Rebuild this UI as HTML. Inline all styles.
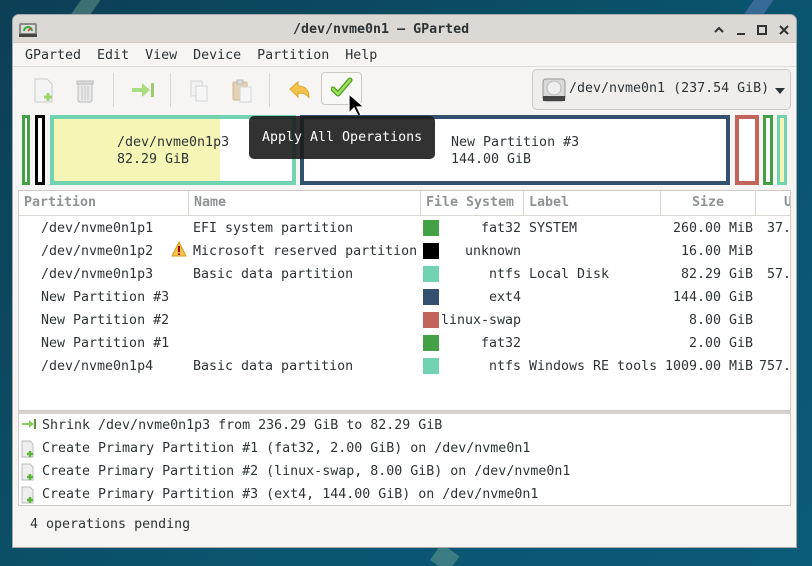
<!DOCTYPE html>
<html><head><meta charset="utf-8"><style>
*{box-sizing:border-box;margin:0;padding:0}
html{width:812px;height:566px;overflow:hidden}
body{width:812px;height:566px;overflow:hidden;position:relative;background:#0b4f66;font-family:"DejaVu Sans Mono","Liberation Mono",monospace;font-size:13.3px;color:#2e3436}
.bg{position:absolute;inset:0;background:linear-gradient(135deg,#0d3f55 0%,#0a5570 60%,#0b5a78 100%)}
.stripe{position:absolute;background:rgba(120,170,150,.45);transform:rotate(-55deg);transform-origin:0 0}
.win{position:absolute;left:13px;top:15px;width:783px;height:532px;background:#f6f5f4;border-radius:6px 6px 0 0;overflow:hidden;box-shadow:0 0 0 1px #aaa}
.title{position:absolute;left:0;top:0;width:100%;height:28px;background:#dcd9d5;border-bottom:1px solid #cfcac5}
.abs{position:absolute;white-space:pre}
.menu{position:absolute;top:28px;left:0;width:100%;height:24px;background:#f6f5f4;border-bottom:1px solid #dedbd8}
.sep{position:absolute;top:58px;width:1px;height:34px;background:#d8d5d2}
.tbl{position:absolute;left:5px;top:175px;width:773px;height:221px;background:#fff;border:1px solid #cfcac5;overflow:hidden}
.hdr{position:absolute;top:0;height:25px;border-right:1px solid #dcd8d4;border-bottom:1px solid #dcd8d4;color:#8f9394;font-weight:bold;padding:4px 5px}
.sw{position:absolute;width:16px;height:16px}
</style></head><body>
<div class="bg"></div>
<div class="stripe" style="left:60px;top:30px;width:90px;height:16px"></div>
<div class="stripe" style="left:430px;top:560px;width:20px;height:22px"></div>
<div class="stripe" style="left:740px;top:20px;width:40px;height:16px;background:rgba(100,130,190,.5)"></div>
<div class="win">
 <div class="title">
  <svg class="abs" style="left:5px;top:6px" width="20" height="18" viewBox="0 0 20 18"><rect x="1" y="2" width="18" height="13" rx="2" fill="#8b8b8b"/><rect x="3" y="4" width="14" height="8" rx="1" fill="#ddd"/><path d="M6 10a4 4 0 0 1 8 0" stroke="#3a3" stroke-width="2" fill="none"/><path d="M10 10l3-3" stroke="#c33" stroke-width="1.5"/><rect x="1" y="13" width="18" height="3" fill="#444"/></svg>
  <div class="abs" style="left:280px;top:7px;font-weight:bold;color:#2e3436">/dev/nvme0n1 – GParted</div>
  <svg class="abs" style="left:700px;top:9px" width="80" height="12" viewBox="0 0 80 12"><path d="M2 8l4-4 4 4" stroke="#2e3436" stroke-width="2" fill="none"/><path d="M24 10h8" stroke="#2e3436" stroke-width="2"/><rect x="45" y="2" width="8" height="8" stroke="#2e3436" stroke-width="2" fill="none"/><path d="M67 2l8 8M75 2l-8 8" stroke="#2e3436" stroke-width="2"/></svg>
 </div>
 <div class="menu">
  <div class="abs" style="left:12px;top:5px">GParted  Edit  View  Device  Partition  Help</div>
 </div>
 <svg class="abs" style="left:20px;top:63px" width="22" height="26" viewBox="0 0 22 26"><path d="M2 1h12l5 5v18H2z" fill="#f4f4f4" stroke="#ccc"/><path d="M15 15v8M11 19h8" stroke="#9fd36f" stroke-width="3"/></svg>
 <svg class="abs" style="left:62px;top:63px" width="20" height="26" viewBox="0 0 20 26"><rect x="3" y="5" width="14" height="19" rx="2" fill="#e8e8e8" stroke="#bbb"/><rect x="2" y="3" width="16" height="3" fill="#ddd" stroke="#bbb"/><path d="M7 8v14M10 8v14M13 8v14" stroke="#c8c8c8"/></svg>
 <div class="sep" style="left:100px"></div>
 <svg class="abs" style="left:118px;top:66px" width="24" height="18" viewBox="0 0 24 18"><path d="M1 7h10V2l8 7-8 7v-5H1z" fill="#a8dd7e"/><rect x="20" y="2" width="3" height="14" fill="#9ccc6c"/></svg>
 <div class="sep" style="left:157px"></div>
 <svg class="abs" style="left:176px;top:63px" width="20" height="26" viewBox="0 0 20 26"><rect x="2" y="3" width="11" height="15" fill="#f2f2f2" stroke="#d4d4d4"/><rect x="7" y="8" width="11" height="15" fill="#f6f6f6" stroke="#d4d4d4"/></svg>
 <svg class="abs" style="left:218px;top:63px" width="22" height="26" viewBox="0 0 22 26"><rect x="2" y="4" width="14" height="18" rx="1" fill="#e4d2b4" stroke="#cfb994"/><rect x="6" y="2" width="6" height="4" fill="#ddd" stroke="#bbb"/><rect x="9" y="9" width="11" height="15" fill="#f6f6f6" stroke="#d4d4d4"/></svg>
 <div class="sep" style="left:256px"></div>
 <svg class="abs" style="left:275px;top:64px" width="24" height="24" viewBox="0 0 24 24"><path d="M2 10l8-7v4c7 0 11 4 11 12-2-4-5-5-11-5v4z" fill="#f5c34d" stroke="#e0a526"/></svg>
 <div class="abs" style="left:308px;top:57px;width:41px;height:33px;border:1px solid #cdc7c2;border-radius:4px;background:#f8f8f7"></div>
 <svg class="abs" style="left:318px;top:62px" width="22" height="22" viewBox="0 0 22 22"><path d="M2 12l5 5L19 3" stroke="#4f9a1f" stroke-width="5" fill="none" stroke-linecap="round" stroke-linejoin="round"/><path d="M2 12l5 5L19 3" stroke="#9be05a" stroke-width="2.5" fill="none" stroke-linecap="round" stroke-linejoin="round"/></svg>
 <svg class="abs" style="left:335px;top:78px" width="16" height="26" viewBox="0 0 16 26"><path d="M1 1v19l5-5 4 8 3-1-4-8h7z" fill="#000" stroke="#fff" stroke-width="1.2"/></svg>
 <div class="abs" style="left:519px;top:54px;width:259px;height:41px;border:1px solid #cdc7c2;border-radius:5px;background:#efeeec"></div>
 <svg class="abs" style="left:528px;top:62px" width="26" height="26" viewBox="0 0 26 26"><rect x="2" y="2" width="22" height="22" rx="3" fill="#d9d9d9" stroke="#999"/><circle cx="13" cy="11" r="7" fill="#eee" stroke="#bbb"/><rect x="2" y="19" width="22" height="5" fill="#444"/></svg>
 <div class="abs" style="left:556px;top:66px">/dev/nvme0n1 (237.54 GiB)</div>
 <svg class="abs" style="left:761px;top:72px" width="12" height="8" viewBox="0 0 12 8"><path d="M1 1h10L6 7z" fill="#2e3436"/></svg>
 <div class="abs" style="left:9px;top:100px;width:8px;height:70px;border:3px solid #44a044;background:#fff"></div>
 <div class="abs" style="left:22px;top:100px;width:10px;height:70px;border:3px solid #000;background:#fff"></div>
 <div class="abs" style="left:37px;top:100px;width:246px;height:70px;border:4px solid #72d3b2;background:linear-gradient(90deg,#f5f5b5 0,#f5f5b5 166px,#fff 166px)"></div>
 <div class="abs" style="left:104px;top:119px;line-height:17px">/dev/nvme0n1p3
82.29 GiB</div>
 <div class="abs" style="left:287px;top:100px;width:430px;height:70px;border:4px solid #33506e;background:#fff"></div>
 <div class="abs" style="left:438px;top:119px;line-height:17px">New Partition #3
144.00 GiB</div>
 <div class="abs" style="left:722px;top:100px;width:24px;height:70px;border:4px solid #c3645a;background:#fff"></div>
 <div class="abs" style="left:750px;top:100px;width:10px;height:70px;border:3px solid #44a044;background:#fff"></div>
 <div class="abs" style="left:764px;top:100px;width:10px;height:70px;border:3px solid #72d3b2;background:#f5f5b5"></div>
 <div class="abs" style="left:236px;top:101px;width:186px;height:43px;background:rgba(28,28,28,.9);border-radius:5px;color:#fff;padding:14px 0 0 13px">Apply All Operations</div>
 <div class="tbl">
  <div class="hdr" style="left:0;width:170px">Partition</div>
  <div class="hdr" style="left:170px;width:232px">Name</div>
  <div class="hdr" style="left:402px;width:103px">File System</div>
  <div class="hdr" style="left:505px;width:137px">Label</div>
  <div class="hdr" style="left:642px;width:95px;text-align:center">Size</div>
  <div class="hdr" style="left:737px;width:40px;border-right:0;padding-left:28px">U</div>
  <div class="abs" style="left:22px;top:26px;line-height:23px">/dev/nvme0n1p1
/dev/nvme0n1p2
/dev/nvme0n1p3
New Partition #3
New Partition #2
New Partition #1
/dev/nvme0n1p4</div>
  <svg class="abs" style="left:152px;top:50px" width="16" height="16" viewBox="0 0 16 16"><path d="M8 1l7 14H1z" fill="#f5c34d" stroke="#d69b16"/><path d="M8 5v6M8 12.5v1.5" stroke="#a00" stroke-width="2"/></svg>
  <div class="abs" style="left:174px;top:26px;line-height:23px">EFI system partition
Microsoft reserved partition
Basic data partition



Basic data partition</div>
  <div class="sw" style="left:404px;top:29px;background:#44a044"></div>
  <div class="sw" style="left:404px;top:52px;background:#000"></div>
  <div class="sw" style="left:404px;top:75px;background:#72d3b2"></div>
  <div class="sw" style="left:404px;top:98px;background:#33506e"></div>
  <div class="sw" style="left:404px;top:121px;background:#c3645a"></div>
  <div class="sw" style="left:404px;top:144px;background:#44a044"></div>
  <div class="sw" style="left:404px;top:167px;background:#72d3b2"></div>
  <div class="abs" style="left:420px;top:26px;width:82px;text-align:right;line-height:23px">fat32
unknown
ntfs
ext4
linux-swap
fat32
ntfs</div>
  <div class="abs" style="left:510px;top:26px;line-height:23px">SYSTEM

Local Disk



Windows RE tools</div>
  <div class="abs" style="left:620px;top:26px;width:114px;text-align:right;line-height:23px">260.00 MiB
16.00 MiB
82.29 GiB
144.00 GiB
8.00 GiB
2.00 GiB
1009.00 MiB</div>
  <div class="abs" style="left:736px;top:26px;width:36px;text-align:right;line-height:23px">37.

57.



757.</div>
 </div>
 <div class="abs" style="left:5px;top:396px;width:773px;height:95px;background:#fff;border:1px solid #cfcac5;border-top:3px solid #d6d2cd"></div>
 <svg class="abs" style="left:8px;top:403px" width="16" height="12" viewBox="0 0 16 12"><path d="M1 5h7V2l5 4-5 4V7H1z" fill="#8acb5c"/><rect x="13" y="1" width="2" height="10" fill="#5a9a35"/></svg>
 <svg class="abs" style="left:8px;top:425px" width="14" height="18" viewBox="0 0 14 18"><path d="M1 1h8l3 3v13H1z" fill="#eee" stroke="#bbb"/><path d="M9 11v6M6 14h6" stroke="#5ab33a" stroke-width="2.5"/></svg>
 <svg class="abs" style="left:8px;top:448px" width="14" height="18" viewBox="0 0 14 18"><path d="M1 1h8l3 3v13H1z" fill="#eee" stroke="#bbb"/><path d="M9 11v6M6 14h6" stroke="#5ab33a" stroke-width="2.5"/></svg>
 <svg class="abs" style="left:8px;top:471px" width="14" height="18" viewBox="0 0 14 18"><path d="M1 1h8l3 3v13H1z" fill="#eee" stroke="#bbb"/><path d="M9 11v6M6 14h6" stroke="#5ab33a" stroke-width="2.5"/></svg>
 <div class="abs" style="left:29px;top:399px;line-height:23px">Shrink /dev/nvme0n1p3 from 236.29 GiB to 82.29 GiB
Create Primary Partition #1 (fat32, 2.00 GiB) on /dev/nvme0n1
Create Primary Partition #2 (linux-swap, 8.00 GiB) on /dev/nvme0n1
Create Primary Partition #3 (ext4, 144.00 GiB) on /dev/nvme0n1</div>
 <div class="abs" style="left:17px;top:502px">4 operations pending</div>
</div>
</body></html>
